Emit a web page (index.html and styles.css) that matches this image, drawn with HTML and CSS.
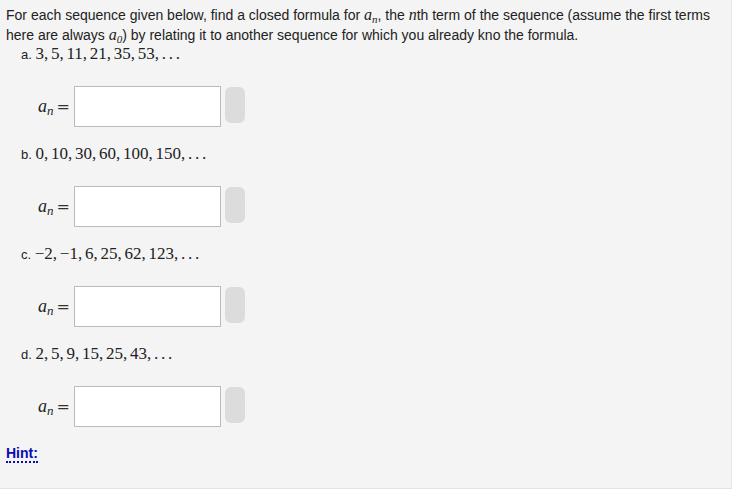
FILE: index.html
```html
<!DOCTYPE html>
<html>
<head>
<meta charset="utf-8">
<link rel="stylesheet" href="styles.css">
</head>
<body>
<div class="page">
  <p class="intro">For each sequence given below, find a closed formula for <span class="m">a<sub>n</sub></span>, the <span class="m">n</span>th term of the sequence (assume the first terms here are always <span class="m">a<sub>0</sub></span>) by relating it to another sequence for which you already kno the formula.</p>

  <div class="part"><span class="lbl">a.</span> <span class="seq">3, 5, 11, 21, 35, 53, . . .</span></div>
  <div class="answer"><span class="an"><span class="m">a<sub>n</sub></span><span class="eq">=</span></span><span class="box"></span><span class="btn"></span></div>

  <div class="part"><span class="lbl">b.</span> <span class="seq">0, 10, 30, 60, 100, 150, . . .</span></div>
  <div class="answer"><span class="an"><span class="m">a<sub>n</sub></span><span class="eq">=</span></span><span class="box"></span><span class="btn"></span></div>

  <div class="part"><span class="lbl">c.</span> <span class="seq">&minus;2, &minus;1, 6, 25, 62, 123, . . .</span></div>
  <div class="answer"><span class="an"><span class="m">a<sub>n</sub></span><span class="eq">=</span></span><span class="box"></span><span class="btn"></span></div>

  <div class="part"><span class="lbl">d.</span> <span class="seq">2, 5, 9, 15, 25, 43, . . .</span></div>
  <div class="answer"><span class="an"><span class="m">a<sub>n</sub></span><span class="eq">=</span></span><span class="box"></span><span class="btn"></span></div>

  <div class="hintrow"><a class="hint">Hint:</a></div>
</div>
</body>
</html>
```

FILE: styles.css
```css
html, body {
  margin: 0;
  padding: 0;
  background: #ffffff;
}
.page {
  width: 725px;
  height: 483px;
  padding: 5px 0 0 6px;
  background: #f4f4f4;
  border-right: 1px solid #e4e4e4;
  border-bottom: 1px solid #e4e4e4;
  font-family: "Liberation Sans", Arial, sans-serif;
  font-size: 14px;
  color: #222;
}
.intro {
  margin: 0;
  line-height: 20px;
  padding-right: 8px;
}
.m {
  font-family: "Liberation Serif", "DejaVu Serif", serif;
  font-style: italic;
  font-size: 16px;
  line-height: 1;
  color: #222;
}
.m sub {
  font-size: 11px;
  line-height: 0;
  vertical-align: -3px;
}
.part {
  padding-left: 15px;
  height: 20px;
  line-height: 20px;
  font-size: 13px;
}
.seq {
  font-family: "Liberation Serif", "DejaVu Serif", serif;
  font-size: 17px;
  line-height: 1;
  word-spacing: -1.5px;
}
.answer {
  display: flex;
  align-items: flex-start;
  margin-top: 21px;
  margin-bottom: 18px;
  height: 41px;
}
.an {
  width: 64px;
  padding-right: 4px;
  display: flex;
  justify-content: flex-end;
  align-items: baseline;
  height: 41px;
  line-height: 41px;
}
.an .m {
  font-size: 18px;
  line-height: 41px;
}
.an .m sub {
  font-size: 13px;
}
.eq {
  font-family: "DejaVu Serif", serif;
  font-size: 16px;
  margin-left: 3px;
  color: #333;
}
.box {
  display: block;
  width: 145px;
  height: 39px;
  background: #fff;
  border: 1px solid #bbb;
}
.btn {
  display: block;
  width: 20px;
  height: 36px;
  margin-left: 4px;
  margin-top: 1px;
  background: #dcdcdc;
  border-radius: 6px;
}
.hintrow {
  margin-top: 3px;
}
.hint {
  font-size: 14px;
  font-weight: bold;
  color: #0b0bb0;
  text-decoration: none;
  border-bottom: 2px dotted #0b0bb0;
}
```
